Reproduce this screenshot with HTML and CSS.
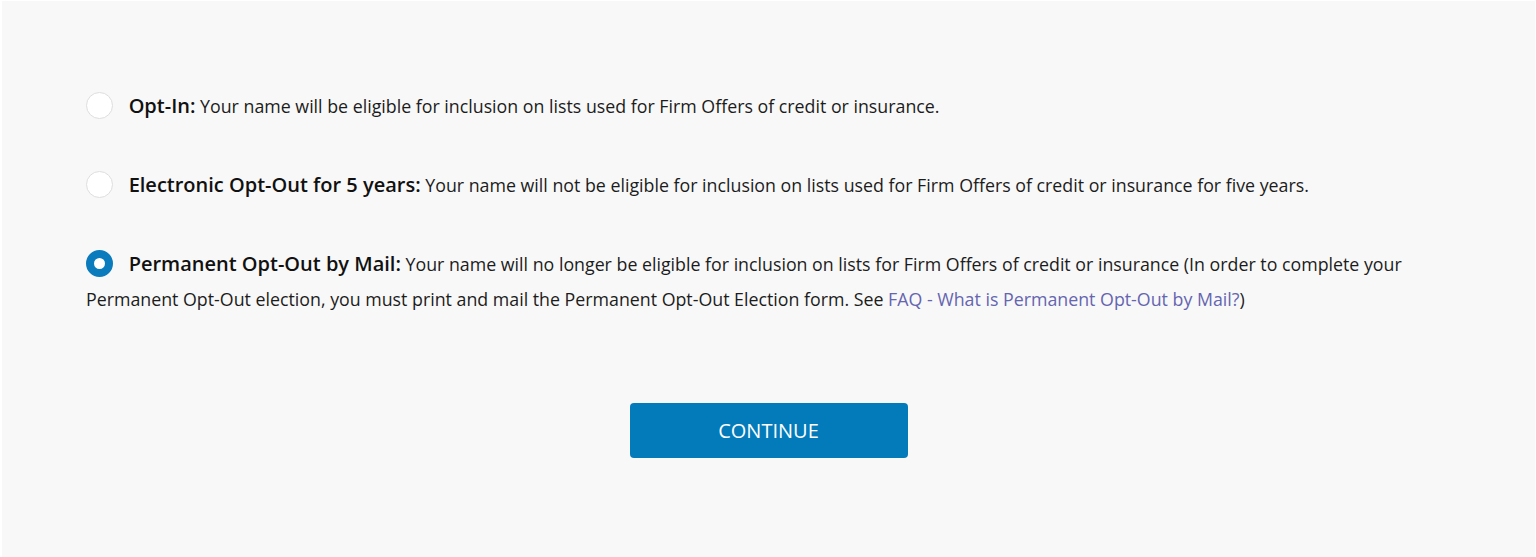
FILE: index.html
```html
<!DOCTYPE html>
<html>
<head>
    <title>Opt-Out Election</title>
    <link rel="stylesheet" href="styles.css">
</head>
<body>
    <div class="panel">
        <form class="election-form">
            <div class="election-option">
                <input type="radio" id="optIn" name="election" value="optin" class="election-radio">
                <label for="optIn"><strong>Opt-In:</strong> Your name will be eligible for inclusion on lists used for Firm Offers of credit or insurance.</label>
            </div>

            <div class="election-option">
                <input type="radio" id="optOut5" name="election" value="optout5" class="election-radio">
                <label for="optOut5"><strong>Electronic Opt-Out for 5 years:</strong> Your name will not be eligible for inclusion on lists used for Firm Offers of credit or insurance for five years.</label>
            </div>

            <div class="election-option">
                <input type="radio" id="optOutPerm" name="election" value="optoutperm" class="election-radio" checked>
                <label for="optOutPerm"><strong>Permanent Opt-Out by Mail:</strong> Your name will no longer be eligible for inclusion on lists for Firm Offers of credit or insurance (In order to complete your Permanent Opt-Out election, you must print and mail the Permanent Opt-Out Election form. See <a href="#" class="faq-link">FAQ - What is Permanent Opt-Out by Mail?</a>)</label>
            </div>

            <div class="button-row">
                <button type="button" class="continue-button">CONTINUE</button>
            </div>
        </form>
    </div>
</body>
</html>
```

FILE: styles.css
```css
html, body {
    margin: 0;
    padding: 0;
    background-color: #fff;
}

body {
    font-family: "Open Sans", Arial, sans-serif;
    font-size: 17.8px;
    color: #1c1c1c;
}

.panel {
    margin: 1px 1px 0 2px;
    min-height: 556px;
    background-color: #f8f8f8;
    padding: 87px 84px 0 84px;
    box-sizing: border-box;
}

.election-option {
    line-height: 35px;
    margin-bottom: 43px;
}

.election-option strong {
    font-size: 20px;
    font-weight: 600;
    color: #111;
}

.election-radio {
    appearance: none;
    -webkit-appearance: none;
    width: 27px;
    height: 27px;
    margin: 0 11px 0 0;
    border: 1px solid #dedede;
    border-radius: 50%;
    background-color: #fff;
    vertical-align: middle;
    position: relative;
    top: -3px;
    box-sizing: border-box;
    cursor: pointer;
}

.election-radio:checked {
    border: 8px solid #0a7bbd;
}

.faq-link {
    color: #6565b0;
    text-decoration: none;
}

.button-row {
    display: flex;
    justify-content: center;
    margin-top: 86px;
}

.continue-button {
    width: 278px;
    height: 55px;
    background-color: #037bbb;
    color: #fff;
    border: none;
    border-radius: 4px;
    font-family: "Open Sans", Arial, sans-serif;
    font-size: 20px;
    cursor: pointer;
}
```
